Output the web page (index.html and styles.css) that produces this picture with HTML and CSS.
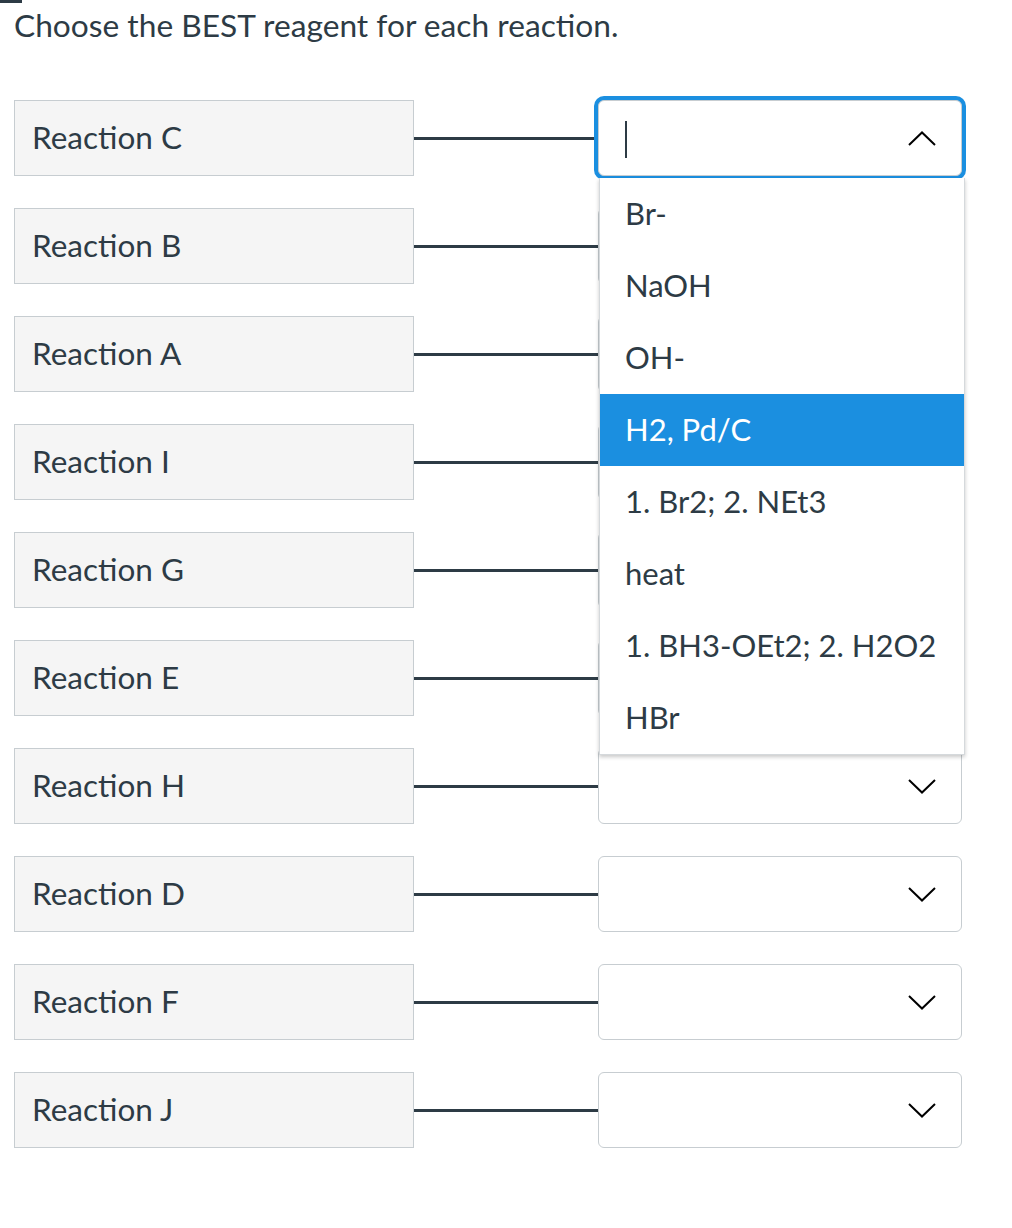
FILE: index.html
```html
<!DOCTYPE html>
<html lang="en">

<head>
    <meta charset="UTF-8">
    <meta name="viewport" content="width=device-width, initial-scale=1.0">
    <title>Matching question</title>
    <link rel="stylesheet" href="styles.css">
</head>

<body>
    <div class="top-bar"></div>
    <p class="prompt">Choose the BEST reagent for each reaction.</p>

    <div class="matches">
        <div class="match">
            <div class="answer">Reaction C</div>
            <div class="link"></div>
            <div class="select open">
                <span class="caret"></span>
                <svg class="chevron" width="28" height="15" viewBox="0 0 28 15"><polyline points="1,14 14,1.5 27,14" /></svg>
                <ul class="menu">
                    <li>Br-</li>
                    <li>NaOH</li>
                    <li>OH-</li>
                    <li class="active">H2, Pd/C</li>
                    <li>1. Br2; 2. NEt3</li>
                    <li>heat</li>
                    <li>1. BH3-OEt2; 2. H2O2</li>
                    <li>HBr</li>
                </ul>
            </div>
        </div>
        <div class="match">
            <div class="answer">Reaction B</div>
            <div class="link"></div>
            <div class="select"><svg class="chevron" width="28" height="15" viewBox="0 0 28 15"><polyline points="1,1 14,13.5 27,1" /></svg></div>
        </div>
        <div class="match">
            <div class="answer">Reaction A</div>
            <div class="link"></div>
            <div class="select"><svg class="chevron" width="28" height="15" viewBox="0 0 28 15"><polyline points="1,1 14,13.5 27,1" /></svg></div>
        </div>
        <div class="match">
            <div class="answer">Reaction I</div>
            <div class="link"></div>
            <div class="select"><svg class="chevron" width="28" height="15" viewBox="0 0 28 15"><polyline points="1,1 14,13.5 27,1" /></svg></div>
        </div>
        <div class="match">
            <div class="answer">Reaction G</div>
            <div class="link"></div>
            <div class="select"><svg class="chevron" width="28" height="15" viewBox="0 0 28 15"><polyline points="1,1 14,13.5 27,1" /></svg></div>
        </div>
        <div class="match">
            <div class="answer">Reaction E</div>
            <div class="link"></div>
            <div class="select"><svg class="chevron" width="28" height="15" viewBox="0 0 28 15"><polyline points="1,1 14,13.5 27,1" /></svg></div>
        </div>
        <div class="match">
            <div class="answer">Reaction H</div>
            <div class="link"></div>
            <div class="select"><svg class="chevron" width="28" height="15" viewBox="0 0 28 15"><polyline points="1,1 14,13.5 27,1" /></svg></div>
        </div>
        <div class="match">
            <div class="answer">Reaction D</div>
            <div class="link"></div>
            <div class="select"><svg class="chevron" width="28" height="15" viewBox="0 0 28 15"><polyline points="1,1 14,13.5 27,1" /></svg></div>
        </div>
        <div class="match">
            <div class="answer">Reaction F</div>
            <div class="link"></div>
            <div class="select"><svg class="chevron" width="28" height="15" viewBox="0 0 28 15"><polyline points="1,1 14,13.5 27,1" /></svg></div>
        </div>
        <div class="match">
            <div class="answer">Reaction J</div>
            <div class="link"></div>
            <div class="select"><svg class="chevron" width="28" height="15" viewBox="0 0 28 15"><polyline points="1,1 14,13.5 27,1" /></svg></div>
        </div>
    </div>
</body>

</html>
```

FILE: styles.css
```css
* {
    margin: 0;
    padding: 0;
    box-sizing: border-box;
    font-family: 'Lato', 'Noto Sans', sans-serif;
}

:root {
    --text-color: #2d3b45;
    --border-color: #c7cdd1;
    --focus-color: #1b8fe0;
}

body {
    background: white;
    color: var(--text-color);
}

.top-bar {
    width: 22px;
    height: 3px;
    background: var(--text-color);
}

.prompt {
    font-size: 31.7px;
    line-height: 1.2;
    margin: 3px 0 0 14px;
}

.matches {
    display: flex;
    flex-direction: column;
    gap: 32px;
    padding-left: 14px;
    margin-top: 56px;
}

.match {
    display: flex;
    align-items: center;
    height: 76px;
}

.answer {
    width: 400px;
    height: 76px;
    display: flex;
    align-items: center;
    padding-left: 17px;
    background: #f5f5f5;
    border: 1px solid var(--border-color);
    font-size: 31.5px;
    line-height: 1.2;
}

.link {
    width: 184px;
    height: 3px;
    background: var(--text-color);
}

.select {
    position: relative;
    width: 364px;
    height: 76px;
    display: flex;
    align-items: center;
    justify-content: flex-end;
    padding-right: 25px;
    border: 1px solid var(--border-color);
    border-radius: 6px;
    background: white;
}

.select.open {
    box-shadow: 0 0 0 4px var(--focus-color);
    z-index: 2;
}

.caret {
    position: absolute;
    left: 26px;
    top: 20px;
    width: 2px;
    height: 37px;
    background: var(--text-color);
}

.chevron polyline {
    fill: none;
    stroke: black;
    stroke-width: 2;
}

.menu {
    position: absolute;
    top: 77px;
    left: 0;
    width: 366px;
    list-style: none;
    background: white;
    border: 1px solid #d5d9dc;
    border-top: none;
    box-shadow: 0 2px 4px rgba(0, 0, 0, 0.22);
}

.menu li {
    height: 72px;
    display: flex;
    align-items: center;
    padding-left: 25px;
    font-size: 31px;
    line-height: 1.2;
}

.menu li.active {
    background: var(--focus-color);
    color: white;
}
```
